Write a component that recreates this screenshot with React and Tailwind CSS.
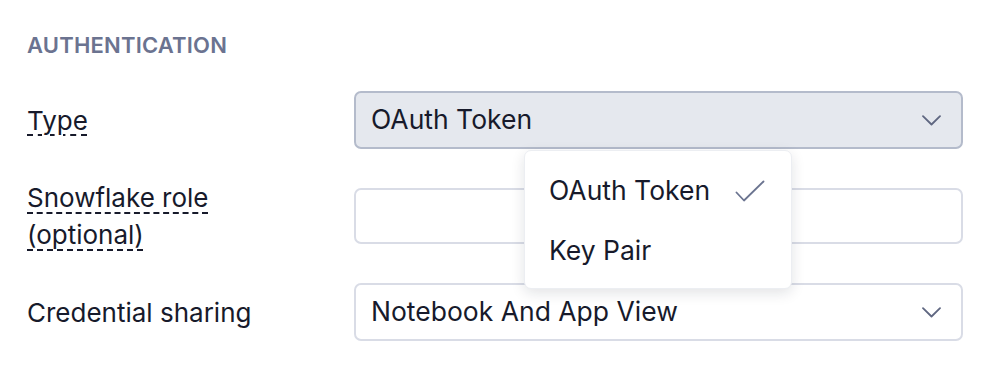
import React from "react";

function Chevron() {
  return (
    <svg width="19" height="11" viewBox="0 0 19 11" fill="none" className="shrink-0">
      <path d="M1 1.2L9.5 9.5L18 1.2" stroke="#5f6781" strokeWidth="1.8" strokeLinecap="round" strokeLinejoin="round" />
    </svg>
  );
}

function Check() {
  return (
    <svg width="30" height="22" viewBox="0 0 30 22" fill="none">
      <path d="M1.5 12.5L9 20.5L28.5 1.5" stroke="#6b7490" strokeWidth="1.8" strokeLinecap="round" strokeLinejoin="round" />
    </svg>
  );
}

export default function App() {
  const label = "underline decoration-dashed decoration-[1.5px] underline-offset-[5px]";
  return (
    <div
      className="relative w-[998px] h-[384px] bg-white text-[#171a2b] pl-[27px] pt-[30px]"
      style={{ fontFamily: "Inter, 'Noto Sans', sans-serif" }}
    >
      <div className="text-[22px] leading-[30px] font-semibold text-[#6b7390] tracking-[0.2px]">
        AUTHENTICATION
      </div>

      <div className="mt-[31px] flex items-center h-[58px]">
        <div className="w-[327px] text-[26px]">
          <span className={label}>Type</span>
        </div>
        <div className="w-[609px] h-[58px] rounded-[7px] border-2 border-[#b4bbcb] bg-[#e5e8ee] flex items-center justify-between pl-[15px] pr-[20px] text-[26.5px]">
          <span>OAuth Token</span>
          <Chevron />
        </div>
      </div>

      <div className="mt-[30px] flex items-center h-[74px]">
        <div className="w-[327px] text-[26px] leading-[37px]">
          <span className={label}>Snowflake role</span>
          <br />
          <span className={label}>(optional)</span>
        </div>
        <div className="w-[609px] h-[56px] rounded-[7px] border-2 border-[#d9dce6] bg-white" />
      </div>

      <div className="mt-[30px] flex items-center h-[58px]">
        <div className="w-[327px] text-[26px]">Credential sharing</div>
        <div className="w-[609px] h-[58px] rounded-[7px] border-2 border-[#d9dce6] bg-white flex items-center justify-between pl-[15px] pr-[20px] text-[26.5px]">
          <span>Notebook And App View</span>
          <Chevron />
        </div>
      </div>

      <div className="absolute left-[524px] top-[150px] w-[268px] h-[139px] rounded-[7px] bg-white border border-[#eceef2] shadow-[0_4px_14px_rgba(20,25,45,0.12)] py-[10px]">
        <div className="h-[60px] flex items-center pl-[24px] pr-[26px] justify-between text-[26.5px]">
          <span>OAuth Token</span>
          <Check />
        </div>
        <div className="h-[60px] flex items-center pl-[24px] text-[26.5px]">
          <span>Key Pair</span>
        </div>
      </div>
    </div>
  );
}
